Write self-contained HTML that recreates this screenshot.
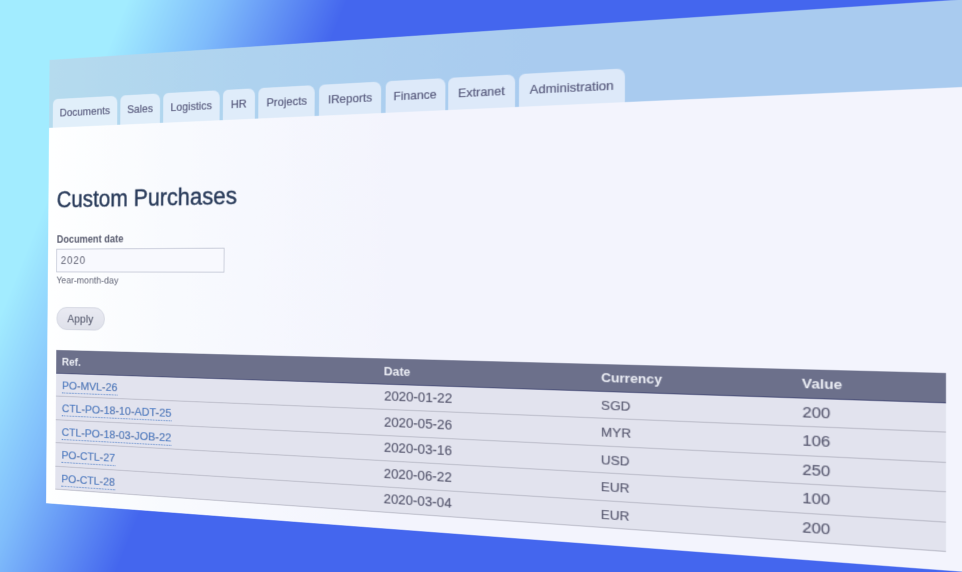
<!DOCTYPE html>
<html>
<head>
<meta charset="utf-8">
<style>
html,body{margin:0;padding:0;width:962px;height:572px;overflow:hidden}
body{position:relative;background:linear-gradient(112deg,#a2ecff 0,#a2ecff 118px,#7fbcfb 205px,#4466ee 322px,#4466ee 100%);font-family:"Liberation Sans",sans-serif}
#p{position:absolute;left:0;top:0;width:0;height:0;transform-origin:0 0;transform:matrix3d(.7406,-.06429,0,-.00023939,-.00708,.84182,0,-.00000748,0,0,1,0,56.3,350,0,1);filter:blur(.35px)}
#p div{position:absolute;white-space:nowrap}
.page{left:-12px;top:-344.8px;width:1060px;height:526.5px;background:linear-gradient(90deg,#feffff 0,#f8fafe 160px,#f3f4fd 420px)}
.band{left:-12px;top:-344.8px;width:1060px;height:80.8px;background:linear-gradient(90deg,#b5dbee 0,#aed2ef 260px,#a9cbef 560px)}
.tab{top:-298.5px;height:34.5px;line-height:34px;text-align:center;font-size:13px;color:#55577a;border-radius:6px 8px 0 0;background:#dde9f9;-webkit-text-stroke:.15px #55577a}
.h{left:-1px;top:-198.5px;line-height:40px;font-size:26.8px;color:#2b3d5c;-webkit-text-stroke:.5px #2b3d5c}
.l{left:-.5px;top:-141.2px;line-height:20px;font-size:12px;font-weight:bold;color:#5a5d70}
.i{left:-1px;top:-119.8px;width:210px;height:26px;border:1px solid #c4c8d6;background:#f8f9fe;line-height:25px;font-size:13px;letter-spacing:1px;color:#5a5c6e;text-indent:5px}
.hint{left:-.5px;top:-91.8px;line-height:20px;font-size:11.4px;color:#5f6274}
.b{left:-.5px;top:-50.7px;width:61.5px;height:25px;line-height:25px;text-align:center;border:1px solid #d0d3df;border-radius:13px;background:linear-gradient(#e9eaf2,#dfe1ea);font-size:13.5px;color:#585c70;-webkit-text-stroke:.1px #585c70}
.r{left:0;width:920px;height:26.5px;background:#e2e3ee;border-bottom:1px solid #babbc8}
.th{left:0;top:0;width:920px;height:26.5px;background:#6c708b;border-bottom:1px solid #4a4f78}
.t{line-height:27.5px;font-size:14px;color:#585970;-webkit-text-stroke:.12px #585970}
.t.hd{font-size:13.2px;font-weight:bold;color:#eceef5;-webkit-text-stroke:0}
.c1{left:8px;font-size:13.6px}
.c1 span{color:#4a7bc6;border-bottom:1px dotted #4a7bc6;padding-bottom:1px}
.c2{left:394px;font-size:14.2px;margin-top:.6px}
.c3{left:616px;font-size:13px;margin-top:.3px}
.c4{left:800px;font-size:14.4px;margin-top:1.3px}
</style>
</head>
<body>
<div id="p">
  <div class="page"></div>
  <div class="band"></div>

  <div class="tab" style="left:-7.3px;width:84.4px;background:#e1effa">Documents</div>
  <div class="tab" style="left:80.9px;width:50px;background:#e0eefa">Sales</div>
  <div class="tab" style="left:135.1px;width:68.5px;background:#e0edfa">Logistics</div>
  <div class="tab" style="left:207.7px;width:38.4px;background:#dfecfa">HR</div>
  <div class="tab" style="left:250.4px;width:65px;background:#deebf9">Projects</div>
  <div class="tab" style="left:319.9px;width:69.4px;background:#ddeaf9">IReports</div>
  <div class="tab" style="left:393.6px;width:64px">Finance</div>
  <div class="tab" style="left:461.1px;width:68.8px">Extranet</div>
  <div class="tab" style="left:534px;width:104.1px">Administration</div>

  <div class="h">Custom Purchases</div>
  <div class="l">Document date</div>
  <div class="i">2020</div>
  <div class="hint">Year-month-day</div>
  <div class="b">Apply</div>

  <div class="th"></div>
  <div class="r" style="top:27.5px"></div>
  <div class="r" style="top:55px"></div>
  <div class="r" style="top:82.5px"></div>
  <div class="r" style="top:110px"></div>
  <div class="r" style="top:137.5px"></div>

  <div class="t hd" style="left:7.5px;top:0">Ref.</div>
  <div class="t hd" style="left:393.6px;top:0">Date</div>
  <div class="t hd" style="left:615.9px;top:0">Currency</div>
  <div class="t hd" style="left:799.6px;top:0">Value</div>

  <div class="t c1" style="top:27.5px"><span>PO-MVL-26</span></div>
  <div class="t c2" style="top:27.5px">2020-01-22</div>
  <div class="t c3" style="top:27.5px">SGD</div>
  <div class="t c4" style="top:27.5px">200</div>

  <div class="t c1" style="top:55px"><span>CTL-PO-18-10-ADT-25</span></div>
  <div class="t c2" style="top:55px">2020-05-26</div>
  <div class="t c3" style="top:55px">MYR</div>
  <div class="t c4" style="top:55px">106</div>

  <div class="t c1" style="top:82.5px"><span>CTL-PO-18-03-JOB-22</span></div>
  <div class="t c2" style="top:82.5px">2020-03-16</div>
  <div class="t c3" style="top:82.5px">USD</div>
  <div class="t c4" style="top:82.5px">250</div>

  <div class="t c1" style="top:110px"><span>PO-CTL-27</span></div>
  <div class="t c2" style="top:110px">2020-06-22</div>
  <div class="t c3" style="top:110px">EUR</div>
  <div class="t c4" style="top:110px">100</div>

  <div class="t c1" style="top:137.5px"><span>PO-CTL-28</span></div>
  <div class="t c2" style="top:137.5px">2020-03-04</div>
  <div class="t c3" style="top:137.5px">EUR</div>
  <div class="t c4" style="top:137.5px">200</div>
</div>
</body>
</html>
